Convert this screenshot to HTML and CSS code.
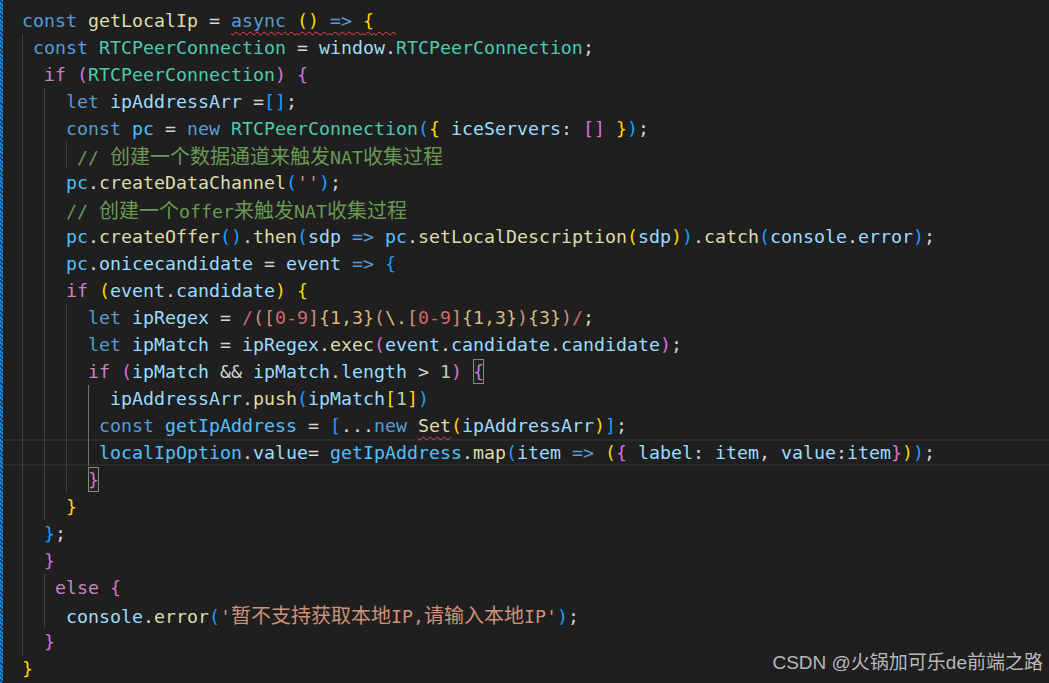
FILE: index.html
```html
<!DOCTYPE html>
<html lang="zh">
<head>
<meta charset="utf-8">
<title>getLocalIp</title>
<link rel="stylesheet" href="styles.css">
</head>
<body>
<div class="editor">
  <div class="strip"></div>
  <div class="code">
<div class="ln"><span class="k">const</span> <span class="f">getLocalIp</span> = <span class="sq"><span class="k">async</span> <span class="b1">()</span> <span class="k">=&gt;</span> <span class="b1">{</span>&nbsp;&nbsp;&#8203;</span></div>
<div class="ln"><span class="g"> </span><span class="k">const</span> <span class="t">RTCPeerConnection</span> = <span class="v">window</span>.<span class="t">RTCPeerConnection</span>;</div>
<div class="ln"><span class="g">  </span><span class="c">if</span> <span class="b2">(</span><span class="t">RTCPeerConnection</span><span class="b2">)</span> <span class="b2">{</span></div>
<div class="ln"><span class="g">  </span><span class="g">  </span><span class="k">let</span> <span class="v">ipAddressArr</span> =<span class="b3">[]</span>;</div>
<div class="ln"><span class="g">  </span><span class="g">  </span><span class="k">const</span> <span class="cn">pc</span> = <span class="k">new</span> <span class="t">RTCPeerConnection</span><span class="b3">(</span><span class="b1">{</span> <span class="v">iceServers</span>: <span class="b2">[]</span> <span class="b1">}</span><span class="b3">)</span>;</div>
<div class="ln"><span class="g">  </span><span class="g">  </span><span class="g"> </span><span class="cm">// <span class="zh">创建一个数据通道来触发</span>NAT<span class="zh">收集过程</span></span></div>
<div class="ln"><span class="g">  </span><span class="g">  </span><span class="cn">pc</span>.<span class="f">createDataChannel</span><span class="b3">(</span><span class="s">''</span><span class="b3">)</span>;</div>
<div class="ln"><span class="g">  </span><span class="g">  </span><span class="cm">// <span class="zh">创建一个</span>offer<span class="zh">来触发</span>NAT<span class="zh">收集过程</span></span></div>
<div class="ln"><span class="g">  </span><span class="g">  </span><span class="cn">pc</span>.<span class="f">createOffer</span><span class="b3">()</span>.<span class="f">then</span><span class="b3">(</span><span class="v">sdp</span> <span class="k">=&gt;</span> <span class="cn">pc</span>.<span class="f">setLocalDescription</span><span class="b1">(</span><span class="v">sdp</span><span class="b1">)</span><span class="b3">)</span>.<span class="f">catch</span><span class="b3">(</span><span class="v">console</span>.<span class="v">error</span><span class="b3">)</span>;</div>
<div class="ln"><span class="g">  </span><span class="g">  </span><span class="cn">pc</span>.<span class="v">onicecandidate</span> = <span class="v">event</span> <span class="k">=&gt;</span> <span class="b3">{</span></div>
<div class="ln"><span class="g">  </span><span class="g">  </span><span class="c">if</span> <span class="b1">(</span><span class="v">event</span>.<span class="v">candidate</span><span class="b1">)</span> <span class="b1">{</span></div>
<div class="ln"><span class="g">  </span><span class="g">  </span><span class="g">  </span><span class="k">let</span> <span class="v">ipRegex</span> = <span class="re">/</span><span class="rg">(</span><span class="rg">[</span><span class="re">0-9</span><span class="rg">]</span><span class="rq">{1,3}</span><span class="rg">(</span><span class="rq">\.</span><span class="rg">[</span><span class="re">0-9</span><span class="rg">]</span><span class="rq">{1,3}</span><span class="rg">)</span><span class="rq">{3}</span><span class="rg">)</span><span class="re">/</span>;</div>
<div class="ln"><span class="g">  </span><span class="g">  </span><span class="g">  </span><span class="k">let</span> <span class="v">ipMatch</span> = <span class="v">ipRegex</span>.<span class="f">exec</span><span class="b2">(</span><span class="v">event</span>.<span class="v">candidate</span>.<span class="v">candidate</span><span class="b2">)</span>;</div>
<div class="ln"><span class="g">  </span><span class="g">  </span><span class="g">  </span><span class="c">if</span> <span class="b2">(</span><span class="v">ipMatch</span> &amp;&amp; <span class="v">ipMatch</span>.<span class="v">length</span> &gt; <span class="n">1</span><span class="b2">)</span> <span class="b2 mb">{</span></div>
<div class="ln"><span class="g">  </span><span class="g">  </span><span class="g">  </span><span class="g a">  </span><span class="v">ipAddressArr</span>.<span class="f">push</span><span class="b3">(</span><span class="v">ipMatch</span><span class="b1">[</span><span class="n">1</span><span class="b1">]</span><span class="b3">)</span></div>
<div class="ln"><span class="g">  </span><span class="g">  </span><span class="g">  </span><span class="g a"> </span><span class="k">const</span> <span class="cn">getIpAddress</span> = <span class="b3">[</span>...<span class="k">new</span> <span class="f sq">Set</span><span class="b1">(</span><span class="v">ipAddressArr</span><span class="b1">)</span><span class="b3">]</span>;</div>
<div class="ln cur"><span class="g">  </span><span class="g">  </span><span class="g">  </span><span class="g a"> </span><span class="cn">localIpOption</span>.<span class="v">value</span>= <span class="cn">getIpAddress</span>.<span class="f">map</span><span class="b3">(</span><span class="v">item</span> <span class="k">=&gt;</span> <span class="b1">(</span><span class="b2">{</span> <span class="v">label</span>: <span class="v">item</span>, <span class="v">value</span>:<span class="v">item</span><span class="b2">}</span><span class="b1">)</span><span class="b3">)</span>;</div>
<div class="ln"><span class="g">  </span><span class="g">  </span><span class="g">  </span><span class="b2 mb">}</span></div>
<div class="ln"><span class="g">  </span><span class="g">  </span><span class="b1">}</span></div>
<div class="ln"><span class="g">  </span><span class="b3">}</span>;</div>
<div class="ln"><span class="g">  </span><span class="b2">}</span></div>
<div class="ln"><span class="g">  </span><span class="g"> </span><span class="c">else</span> <span class="b2">{</span></div>
<div class="ln"><span class="g">  </span><span class="g">  </span><span class="v">console</span>.<span class="f">error</span><span class="b3">(</span><span class="s">'<span class="zh">暂不支持获取本地</span>IP,<span class="zh">请输入本地</span>IP'</span><span class="b3">)</span>;</div>
<div class="ln"><span class="g">  </span><span class="b2">}</span></div>
<div class="ln"><span class="b1">}</span></div>
  </div>
</div>
<div class="watermark">CSDN @火锅加可乐de前端之路</div>
</body>
</html>
```

FILE: styles.css
```css
html, body {
  margin: 0;
  padding: 0;
  background: #1f1f1f;
  height: 100%;
  overflow: hidden;
}

.editor {
  display: flex;
  height: 683px;
  background: #1f1f1f;
}

.strip {
  width: 3px;
  flex: none;
  background: repeating-linear-gradient(45deg, #1c84d8 0 2px, #0e3a63 2px 3px);
}

.code {
  flex: 1;
  padding-top: 7px;
  font-family: "DejaVu Sans Mono", "Liberation Mono", monospace;
  font-size: 18.27px;
  color: #d4d4d4;
}

.ln {
  white-space: pre;
  height: 27px;
  line-height: 27px;
  padding-left: 19px;
}

.ln.cur {
  box-shadow: inset 0 2px 0 #2b2b2b, inset 0 -2px 0 #2b2b2b;
}

.g {
  display: inline-block;
  vertical-align: top;
  height: 27px;
  box-shadow: inset 1px 0 0 #404040;
}

.g.a {
  box-shadow: inset 1px 0 0 #707070;
}

.mb {
  display: inline-block;
  vertical-align: top;
  height: 25px;
  line-height: 25px;
  margin-top: 1px;
  box-shadow: inset 0 0 0 1px #888888;
  background: rgba(0, 100, 0, 0.12);
}

.zh {
  font-family: "Noto Sans CJK SC", sans-serif;
  font-size: 20px;
}

.k { color: #569cd6; }
.c { color: #c586c0; }
.v { color: #9cdcfe; }
.cn { color: #4fc1ff; }
.f { color: #dcdcaa; }
.t { color: #4ec9b0; }
.cm { color: #6a9955; }
.s { color: #ce9178; }
.n { color: #b5cea8; }
.b1 { color: #ffd700; }
.b2 { color: #da70d6; }
.b3 { color: #179fff; }
.re { color: #d16969; }
.rg { color: #ce9178; }
.rq { color: #d7ba7d; }

.sq {
  text-decoration: underline wavy #f14c4c;
  text-decoration-thickness: 1px;
  text-underline-offset: 4px;
  text-decoration-skip-ink: none;
}

.watermark {
  position: absolute;
  right: 6px;
  bottom: 8px;
  line-height: 24px;
  font-family: "Liberation Sans", "Noto Sans CJK SC", sans-serif;
  font-size: 19px;
  color: #b8b8b8;
  white-space: nowrap;
}
```
